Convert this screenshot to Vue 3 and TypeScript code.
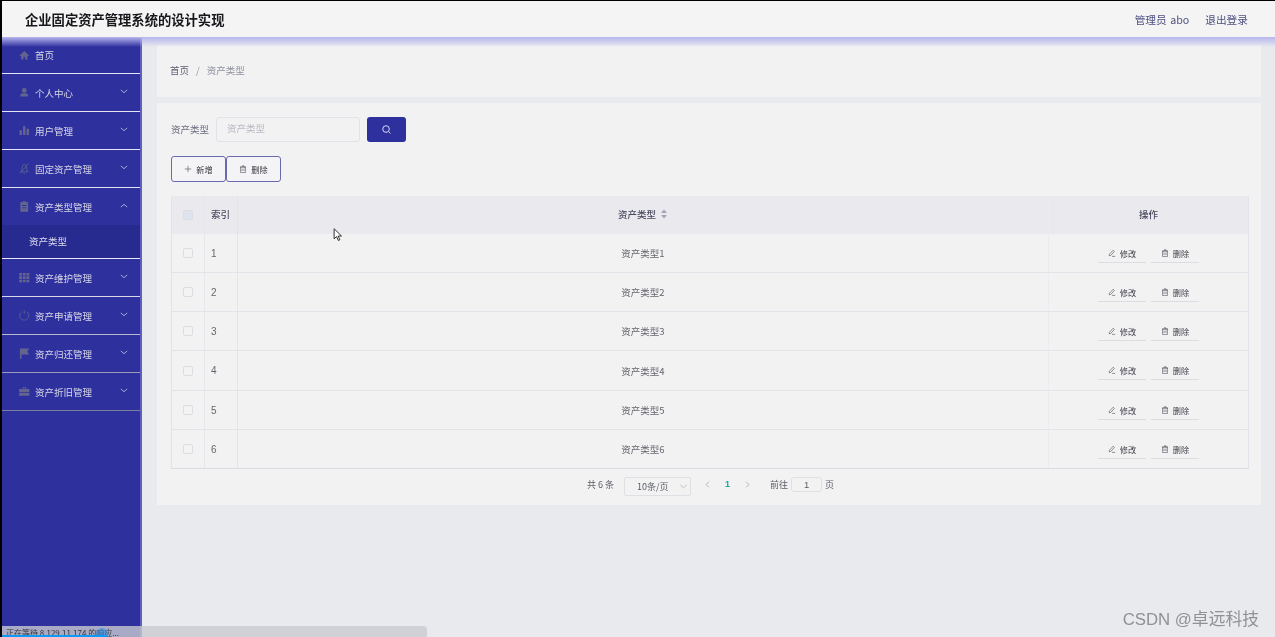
<script setup lang="ts">
interface MenuItem { label: string; icon: string; arrow: boolean; open?: boolean; line: string }
const menu: MenuItem[] = [
  { label: '首页', icon: 'home', arrow: false, line: '#e6e6f2' },
  { label: '个人中心', icon: 'user', arrow: true, line: '#e6e6f2' },
  { label: '用户管理', icon: 'chart', arrow: true, line: '#e6e6f2' },
  { label: '固定资产管理', icon: 'bell', arrow: true, line: '#e6e6f2' },
  { label: '资产类型管理', icon: 'clip', arrow: true, open: true, line: '#ececf2' },
  { label: '资产维护管理', icon: 'grid', arrow: true, line: '#d8d8e6' },
  { label: '资产申请管理', icon: 'power', arrow: true, line: '#b9b9cc' },
  { label: '资产归还管理', icon: 'flag', arrow: true, line: '#9c9cb6' },
  { label: '资产折旧管理', icon: 'case', arrow: true, line: '#7d7f9e' },
]
const rows = [1, 2, 3, 4, 5, 6]
</script>

<template>
  <div class="screen">
    <header class="topbar">
      <div class="title">企业固定资产管理系统的设计实现</div>
      <div class="top-right">
        <span class="who">管理员 abo</span>
        <span>退出登录</span>
      </div>
    </header>
    <div class="body">
      <aside class="side">
        <template v-for="m in menu" :key="m.label">
          <div class="item" :class="{ opened: m.open }" :style="{ borderBottomColor: m.open ? 'transparent' : m.line }">
            <svg class="ico" viewBox="0 0 16 16">
              <path v-if="m.icon === 'home'" d="M8 2.500 1.500 8.500H4v5h3V10h2v3.500h3v-5h2.500z" />
              <path v-else-if="m.icon === 'user'" d="M8 2.500a3 3 0 1 1 0 6.200 3 3 0 0 1 0-6.200zM3 11.500c0-1.500 2-2.200 5-2.200s5 .7 5 2.200v2H3z" />
              <path v-else-if="m.icon === 'chart'" d="M2 8h3v6H2zM6.500 3h3v11h-3zM11 6h3v8h-3z" />
              <path v-else-if="m.icon === 'bell'" class="line" d="M2.500 12.500h11M4.500 12.500c.5-2 .5-4 1-6 .5-2 1.500-3.500 2.500-3.500s2.500 1 3 3.500l.5 6M3 14.500 13 2M7 14.500h2" />
              <path v-else-if="m.icon === 'clip'" d="M6 1.500h4V3h3v12H3V3h3zM5.200 6.500v1.200h5.600V6.500zM5.200 9.500v1.200h5.600V9.500z" fill-rule="evenodd" />
              <path v-else-if="m.icon === 'grid'" d="M1.500 2.500h3.700v3.300H1.500zM6.200 2.500h3.600v3.300H6.200zM10.800 2.500h3.700v3.300h-3.700zM1.500 6.800h3.700v3.300H1.500zM6.200 6.800h3.600v3.300H6.200zM10.800 6.800h3.700v3.300h-3.700zM1.500 11.100h3.700v3.300H1.500zM6.200 11.100h3.600v3.300H6.200zM10.800 11.100h3.700v3.300h-3.700z" />
              <path v-else-if="m.icon === 'power'" class="line" d="M5 3.500a5.800 5.800 0 1 0 6 0M8 1.500v5" />
              <path v-else-if="m.icon === 'flag'" d="M2.500 2h12l-2.700 3.800 2.700 3.700H4.500v5.500h-2z" />
              <path v-else d="M6 2.500h4V5h4.500v3.800h-13V5H6zM7 3.500V5h2V3.500zM1.500 9.800h13v4h-13z" fill-rule="evenodd" />
            </svg>
            <span class="label">{{ m.label }}</span>
            <svg v-if="m.arrow" class="arrow" viewBox="0 0 10 6">
              <path :d="m.open ? 'M1 5 5 1.500 9 5' : 'M1 1 5 4.500 9 1'" />
            </svg>
          </div>
          <div v-if="m.open" class="sub">资产类型</div>
        </template>
      </aside>
      <main class="main">
        <section class="card crumb">
          <span class="c1">首页</span><span class="sep">/</span><span class="c2">资产类型</span>
        </section>
        <section class="card panel">
          <div class="search">
            <span class="s-label">资产类型</span>
            <div class="s-input">资产类型</div>
            <button class="s-btn" type="button">
              <svg viewBox="0 0 12 12" class="s-ico"><circle cx="5.500" cy="5.500" r="3.600" /><path d="m8.300 8.300 2 2" /></svg>
            </button>
          </div>
          <div class="actions">
            <button class="btn" type="button">
              <svg viewBox="0 0 10 10" class="b-ico"><path d="M5 1v8M1 5h8" /></svg>新增
            </button>
            <button class="btn btn2" type="button">
              <svg viewBox="0 0 10 10" class="b-ico"><path d="M2 2.500h6v7H2zM1.200 2.500h7.600M3.800 1h2.400v1.500M3.800 4.500v3M6.200 4.500v3" /></svg>删除
            </button>
          </div>
          <div class="table">
            <div class="tr th">
              <div class="cell c-check"><i class="box box-h"></i></div>
              <div class="cell c-idx">索引</div>
              <div class="cell c-main">
                资产类型
                <svg class="sort" viewBox="0 0 8 10"><path d="M4 .5 7 4H1zM4 9.500 1 6h6z" /></svg>
              </div>
              <div class="cell c-op">操作</div>
            </div>
            <div v-for="r in rows" :key="r" class="tr td">
              <div class="cell c-check"><i class="box"></i></div>
              <div class="cell c-idx num">{{ r }}</div>
              <div class="cell c-main">资产类型{{ r }}</div>
              <div class="cell c-op ops">
                <span class="link">
                  <svg viewBox="0 0 10 10" class="l-ico"><path d="M6.500 1.500 8 3 3.500 8l-2 .5.300-2zM5 9.200h4" /></svg>修改
                </span>
                <span class="link">
                  <svg viewBox="0 0 10 10" class="l-ico"><path d="M2 2.500h6v7H2zM1.200 2.500h7.600M3.800 1h2.400v1.500M3.800 4.500v3M6.200 4.500v3" /></svg>删除
                </span>
              </div>
            </div>
          </div>
          <div class="pager">
            <span>共 6 条</span>
            <div class="size">10条/页<svg viewBox="0 0 10 6" class="p-arrow"><path d="M1 1 5 4.500 9 1" /></svg></div>
            <svg viewBox="0 0 6 10" class="nav"><path d="M5 1 1 5l4 4" /></svg>
            <b class="cur">1</b>
            <svg viewBox="0 0 6 10" class="nav"><path d="m1 1 4 4-4 4" /></svg>
            <span class="goto">前往</span>
            <div class="jump">1</div>
            <span>页</span>
          </div>
        </section>
      </main>
    </div>
    <svg class="cursor" viewBox="0 0 12 18">
      <path d="M1 1v13l3.200-3 2.200 5 2-.9-2.200-4.800H10.500z" />
    </svg>
    <div class="status"><div class="status-text">正在等待 8.129.11.174 的响应...</div><div class="spin"></div><div class="progress"></div></div>
    <div class="mark">CSDN @卓远科技</div>
  </div>
</template>

<style>
html, body { margin: 0; background: #e9eaee; overflow: hidden; }
</style>

<style scoped>
.screen {
  position: relative;
  width: 1275px;
  height: 637px;
  box-sizing: border-box;
  padding: 1px 0 0 2px;
  background: #000;
  overflow: hidden;
  display: flex;
  flex-direction: column;
  font-family: "Noto Sans CJK SC", "Liberation Sans", sans-serif;
  font-size: 9.500px;
  color: #5c5e66;
  filter: blur(.4px);
}
.topbar {
  flex: none;
  height: 36px;
  background: #f4f4f5;
  display: flex;
  align-items: center;
  justify-content: space-between;
  padding: 0 27px 0 23px;
}
.title { font-size: 13.300px; font-weight: 700; color: #17171c; }
.top-right { display: flex; gap: 16px; font-size: 10.700px; color: #4f5180; }
.who { word-spacing: 1px; }
.body { flex: 1; display: flex; min-height: 0; position: relative; }
.body::after {
  content: "";
  position: absolute;
  left: 0;
  right: 0;
  top: 0;
  height: 10px;
  background: linear-gradient(#b6b6ee, rgba(190, 190, 240, 0));
  pointer-events: none;
}
.side {
  flex: none;
  width: 138px;
  background: #2e309e;
  border-right: 2px solid #5d5fc0;
}
.item {
  height: 37px;
  border-bottom: 1px solid #e6e6f2;
  display: flex;
  align-items: center;
  padding-left: 15.500px;
  color: #d6d6e6;
  position: relative;
}
.item:first-child { height: 36px; }
.item.opened { height: 37px; border-bottom: 0; }
.ico { width: 12.500px; height: 12.500px; margin-right: 5px; fill: #63658f; flex: none; }
.ico .line { fill: none; stroke: #63658f; stroke-width: 1; }
.arrow {
  position: absolute;
  right: 12px;
  top: 15px;
  width: 8px;
  height: 5px;
  fill: none;
  stroke: #c5c6e0;
  stroke-width: 1;
}
.sub {
  height: 33px;
  border-bottom: 1px solid #e8e8ee;
  background: #272a8f;
  color: #dcdcec;
  padding-left: 27px;
  line-height: 33px;
}
.main {
  flex: 1;
  min-width: 0;
  background: #e9eaee;
  padding: 8px 14px 0 15px;
  display: flex;
  flex-direction: column;
  gap: 6px;
}
.card { background: #f2f2f3; }
.crumb {
  height: 52px;
  box-sizing: border-box;
  padding: 0 0 3px 13px;
  display: flex;
  align-items: center;
  gap: 7px;
}
.c1 { color: #5c5e70; }
.sep { color: #9a9ba8; }
.c2 { color: #8f919e; }
.panel { height: 402px; padding: 14px 12px 0 14px; box-sizing: border-box; }
.search { display: flex; align-items: center; height: 25px; }
.s-label { width: 45px; color: #6c6e80; padding-bottom: 2px; }
.s-input {
  width: 144px;
  height: 25px;
  box-sizing: border-box;
  border: 1px solid #e2e3ea;
  border-radius: 3px;
  padding-left: 10px;
  line-height: 21px;
  color: #b9bac4;
}
.s-btn {
  width: 39px;
  height: 25px;
  margin-left: 7px;
  border: 0;
  border-radius: 3px;
  background: #2e309e;
  display: flex;
  align-items: center;
  justify-content: center;
  padding: 0;
}
.s-ico { width: 11px; height: 11px; fill: none; stroke: #e8e8f6; stroke-width: 1; }
.actions { display: flex; margin-top: 14px; height: 26px; }
.btn {
  width: 55px;
  height: 26px;
  box-sizing: border-box;
  border: 1px solid #6a6ab0;
  border-radius: 3px;
  background: #f4f4f6;
  display: flex;
  align-items: center;
  justify-content: center;
  gap: 4px;
  padding: 0 0 1px;
  font: inherit;
  font-size: 8.200px;
  color: #34343c;
}
.b-ico { width: 8px; height: 8px; fill: none; stroke: #55555e; stroke-width: .8; }
.table {
  margin-top: 14px;
  border: 1px solid #e3e4ea;
  border-top: 0;
  border-bottom: 1px solid #dcdde4;
}
.tr { display: flex; }
.th { height: 38px; background: #eaeaee; font-weight: 500; color: #4a4a60; }
.th .cell { padding-bottom: 2px; }
.th .c-check { padding-bottom: 0; }
.td { height: 39px; box-sizing: border-box; border-top: 1px solid #e3e4ea; color: #66666e; }
.th + .td { height: 38px; border-top: 0; }
.td:nth-child(5) { height: 40px; }
.cell { display: flex; align-items: center; justify-content: center; box-sizing: border-box; }
.c-check { width: 33px; flex: none; border-right: 1px solid #e6e7ec; }
.c-idx { width: 33px; flex: none; border-right: 1px solid #e3e4ea; justify-content: flex-start; padding-left: 6px; }
.num { font-family: "Liberation Sans", sans-serif; font-size: 10px; }
.c-main { flex: 1; min-width: 0; border-right: 1px solid #ececf0; gap: 4px; }
.c-op { width: 199px; flex: none; }
.box {
  display: block;
  width: 10px;
  height: 10px;
  box-sizing: border-box;
  border: 1px solid #dcdde2;
  border-radius: 2px;
  background: #f3f3f4;
  margin-right: 1px;
}
.box-h { background: #dfe3ee; margin-right: 0; }
.sort { width: 8px; height: 10px; fill: #a3a6bb; }
.ops { gap: 5px; }
.link {
  width: 48px;
  height: 19px;
  box-sizing: border-box;
  border-bottom: 1px solid #dcdde2;
  display: flex;
  align-items: center;
  justify-content: center;
  gap: 4px;
  font-size: 8.200px;
  color: #3f3f48;
}
.l-ico { width: 8px; height: 8px; fill: none; stroke: #55555e; stroke-width: .8; }
.pager {
  display: flex;
  align-items: center;
  height: 14px;
  margin-top: 8px;
  padding-left: 416px;
  color: #5c5e66;
  font-size: 9px;
}
.size {
  width: 67px;
  height: 19px;
  box-sizing: border-box;
  margin-left: 10px;
  align-self: flex-start;
  border: 1px solid #dfe0e6;
  border-radius: 2px;
  display: flex;
  align-items: center;
  padding-left: 12px;
  position: relative;
  flex: none;
}
.p-arrow { position: absolute; right: 2px; top: 6px; width: 9px; height: 5px; fill: none; stroke: #b6b7c0; stroke-width: 1; }
.nav { width: 5px; height: 7px; margin-left: 14px; fill: none; stroke: #9a9ba6; stroke-width: 1; flex: none; }
.cur { margin-left: 15px; color: #1fa8a0; font-family: "Liberation Sans", sans-serif; font-size: 9px; }
.cur + .nav { margin-left: 15px; }
.goto { margin-left: 20px; }
.jump {
  width: 31px;
  height: 15px;
  box-sizing: border-box;
  margin: 0 3px;
  border: 1px solid #dfe0e6;
  border-radius: 3px;
  text-align: center;
  line-height: 13px;
  font-family: "Liberation Sans", sans-serif;
  font-size: 9.500px;
}
.cursor {
  position: absolute;
  left: 333px;
  top: 228px;
  width: 10px;
  height: 14px;
  fill: #fff;
  stroke: #222;
  stroke-width: 1.200;
}
.status {
  position: absolute;
  left: 2px;
  bottom: 0;
  width: 425px;
  height: 11px;
  background: rgba(200, 202, 208, .8);
  border-top-right-radius: 4px;
  overflow: hidden;
}
.status-text { font-size: 8px; line-height: 12px; padding: 1px 0 0 4px; color: #333; white-space: nowrap; }
.spin {
  position: absolute;
  left: 94px;
  top: 2px;
  width: 12px;
  height: 12px;
  border-radius: 50%;
  background: rgba(40, 140, 230, .55);
}
.progress { position: absolute; left: 0; bottom: 0; width: 105px; height: 2px; background: #0f9bf5; }
.mark {
  position: absolute;
  right: 16px;
  bottom: 7px;
  font-size: 16.800px;
  color: #909195;
  font-family: "Liberation Sans", "Noto Sans CJK SC", sans-serif;
}
</style>
